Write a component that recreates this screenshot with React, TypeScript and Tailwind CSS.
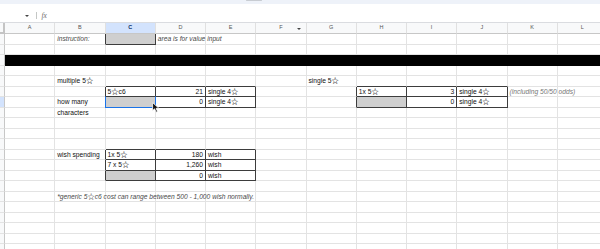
import React from "react";

type Cell = {
  t?: string;
  right?: boolean;
  italic?: boolean;
  light?: boolean;
  fill?: boolean;
  selected?: boolean;
};

const LETTERS = ["A", "B", "C", "D", "E", "F", "G", "H", "I", "J", "K", "L"];
const ROWS = 21;

const data: Record<string, Cell> = {
  "1-1": { t: "instruction:", italic: true },
  "1-2": { fill: true },
  "1-3": { t: "area is for value input", italic: true },
  "5-1": { t: "multiple 5☆" },
  "5-6": { t: "single 5☆" },
  "6-2": { t: "5☆c6" },
  "6-3": { t: "21", right: true },
  "6-4": { t: "single 4☆" },
  "6-7": { t: "1x 5☆" },
  "6-8": { t: "3", right: true },
  "6-9": { t: "single 4☆" },
  "6-10": { t: "(including 50/50 odds)", italic: true, light: true },
  "7-1": { t: "how many" },
  "7-2": { fill: true, selected: true },
  "7-3": { t: "0", right: true },
  "7-4": { t: "single 4☆" },
  "7-7": { fill: true },
  "7-8": { t: "0", right: true },
  "7-9": { t: "single 4☆" },
  "8-1": { t: "characters" },
  "12-1": { t: "wish spending" },
  "12-2": { t: "1x 5☆" },
  "12-3": { t: "180", right: true },
  "12-4": { t: "wish" },
  "13-2": { t: "7 x 5☆" },
  "13-3": { t: "1,260", right: true },
  "13-4": { t: "wish" },
  "14-2": { fill: true },
  "14-3": { t: "0", right: true },
  "14-4": { t: "wish" },
  "16-1": {
    t: "*generic 5☆c6 cost can range between 500 - 1,000 wish normally.",
    italic: true,
  },
};

const tables = new Set<string>();
tables.add("1-2");
for (const r of [6, 7]) for (const c of [2, 3, 4, 7, 8, 9]) tables.add(`${r}-${c}`);
for (const r of [12, 13, 14]) for (const c of [2, 3, 4]) tables.add(`${r}-${c}`);

const inT = (r: number, c: number) => tables.has(`${r}-${c}`);

function Cursor() {
  return (
    <svg
      className="absolute left-[46px] top-[5px] z-30"
      width="8"
      height="11"
      viewBox="0 0 8 11"
    >
      <path
        d="M0.6 0.6 L0.6 8.6 L2.6 6.8 L4.1 10.2 L5.5 9.6 L4.1 6.3 L6.9 6.3 Z"
        fill="#111"
        stroke="#fff"
        strokeWidth="0.8"
        strokeLinejoin="round"
      />
    </svg>
  );
}

function Txt({ s }: { s: string }) {
  const parts = s.split("☆");
  return (
    <>
      {parts.map((p, i) => (
        <React.Fragment key={i}>
          {p}
          {i < parts.length - 1 && (
            <span className="font-['Noto_Sans_CJK_JP',sans-serif] text-[7.3px] font-bold not-italic">☆</span>
          )}
        </React.Fragment>
      ))}
    </>
  );
}

function BodyCell({ r, c }: { r: number; c: number }) {
  const key = `${r}-${c}`;
  const d = data[key];
  const black = r === 3;
  const darkR = inT(r, c) || inT(r, c + 1);
  const darkB = inT(r, c) || inT(r + 1, c);
  const br = black
    ? "border-r-black"
    : darkR
    ? "border-r-[#3d3d3d]"
    : "border-r-[#e3e3e3]";
  const bb = black
    ? "border-b-black"
    : darkB
    ? "border-b-[#3d3d3d]"
    : "border-b-[#e3e3e3]";
  const bg = black ? "bg-black" : d?.fill ? "bg-[#cfcfcf]" : "";
  return (
    <div
      className={`relative flex items-end whitespace-nowrap border-r border-b px-[2px] pb-[0.5px] text-[6.7px] leading-[8px] ${br} ${bb} ${bg} ${
        d?.right ? "justify-end" : "justify-start"
      } ${d?.t ? "z-10" : ""}`}
    >
      {d?.t && (
        <span
          className={`${d.italic ? "italic" : ""} ${
            d.light ? "text-[#777]" : d.italic ? "text-[#4a4a4a]" : "text-[#111]"
          }`}
        >
          <Txt s={d.t} />
        </span>
      )}
      {d?.selected && (
        <>
          <div className="absolute -left-px -top-px right-[-1px] bottom-[-1px] z-20 border border-[#1a73e8] border-t-[#3d3d3d]" />
          <Cursor />
        </>
      )}
    </div>
  );
}

export default function App() {
  const rows = Array.from({ length: ROWS }, (_, i) => i + 1);
  return (
    <div className="relative h-[249px] w-[600px] overflow-hidden bg-white font-['Liberation_Sans',Arial,sans-serif]">
      {/* top band */}
      <div className="flex h-[4px] bg-[#eef2f9]">
        <div className="ml-[246px] h-[1px] w-[16px] rounded bg-[#c8ccd2]" />
      </div>
      {/* formula bar */}
      <div className="flex h-[19px] items-center border-b border-[#dadce0] pt-[5px]">
        <div className="ml-[24.5px] h-0 w-0 border-l-[2px] border-r-[2px] border-t-[2.5px] border-l-transparent border-r-transparent border-t-[#444]" />
        <div className="ml-[7px] h-[7px] w-px bg-[#c4c7c5]" />
        <span className="ml-[5px] font-['Liberation_Serif',serif] text-[7.5px] italic leading-none text-[#6b6b6b]">
          fx
        </span>
      </div>
      {/* column header */}
      <div className="grid h-[11px] grid-cols-[5px_repeat(12,50.25px)] bg-[#f8f9fa]">
        <div className="border-r-2 border-b-2 border-r-[#c4c4c4] border-b-[#c4c4c4]" />
        {LETTERS.map((l, i) => (
          <div
            key={l}
            className={`relative flex items-center justify-center border-r border-b border-r-[#e0e0e0] border-b-[#c7c7c7] text-[5.5px] leading-none ${
              i === 2 ? "bg-[#d3e3fd] font-bold text-[#0b2e66]" : "text-[#555]"
            }`}
          >
            {l}
            {l === "F" && (
              <div className="absolute right-[5px] top-[4.5px] h-0 w-0 border-l-[2px] border-r-[2px] border-t-[2.5px] border-l-transparent border-r-transparent border-t-[#444]" />
            )}
          </div>
        ))}
      </div>
      {/* body */}
      <div className="grid auto-rows-[10.5px] grid-cols-[5px_repeat(12,50.25px)]">
        {rows.map((r) => (
          <React.Fragment key={r}>
            <div
              className={`border-r border-b border-r-[#c7c7c7] border-b-[#e3e3e3] ${
                r === 7 ? "bg-[#d3e3fd]" : "bg-[#f8f9fa]"
              }`}
            />
            {LETTERS.map((_, c) => (
              <BodyCell key={c} r={r} c={c} />
            ))}
          </React.Fragment>
        ))}
      </div>
    </div>
  );
}
